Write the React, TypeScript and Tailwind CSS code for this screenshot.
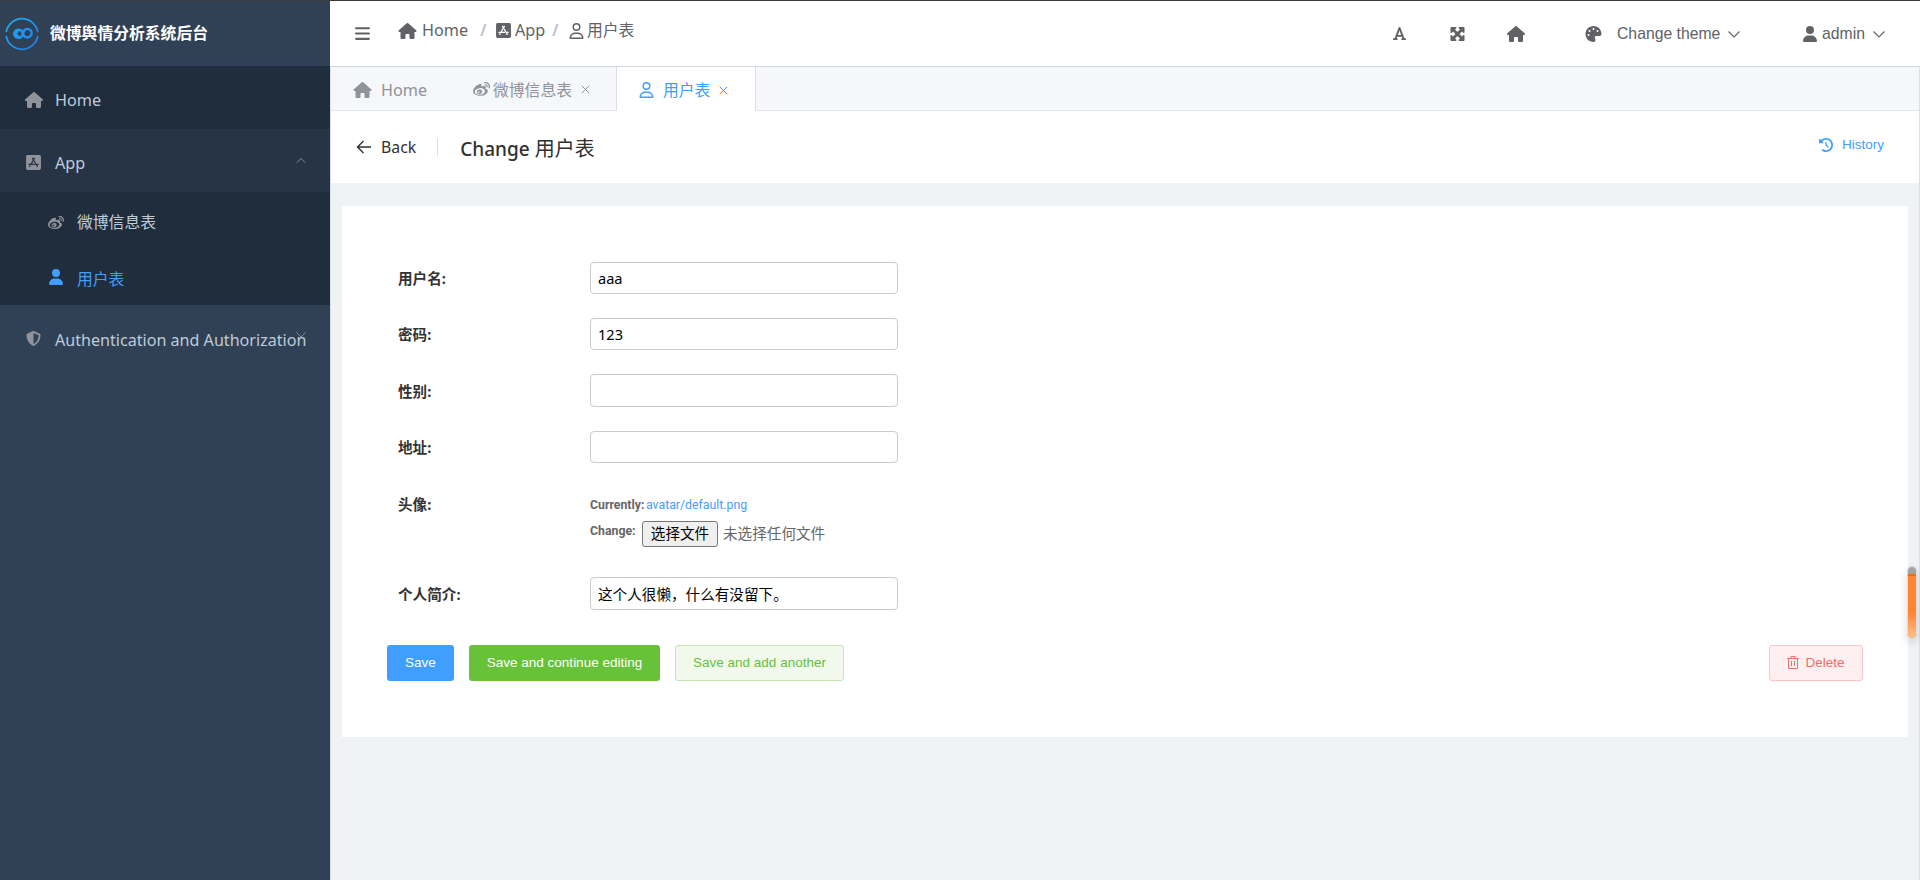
import React from "react";
import {
  FaAppStoreIos,
  FaBars,
  FaClockRotateLeft,
  FaFont,
  FaHouse,
  FaMaximize,
  FaPalette,
  FaRegUser,
  FaShieldHalved,
  FaUser,
  FaWeibo,
} from "react-icons/fa6";

const fields = [
  { label: "用户名:", value: "aaa", row: "h-8 mb-6" },
  { label: "密码:", value: "123", row: "h-8 mb-6" },
  { label: "性别:", value: "", row: "h-[33px] mb-6" },
  { label: "地址:", value: "", row: "h-8" },
];

function Chevron({ className = "", up = false }: { className?: string; up?: boolean }) {
  return (
    <svg viewBox="0 0 12 8" fill="none" stroke="currentColor" strokeWidth="1.1" className={className}>
      <path d={up ? "M1 6.5 6 1.5l5 5" : "M.5 1.5 6 7l5.5-5.5"} />
    </svg>
  );
}

function Close({ className = "" }: { className?: string }) {
  return (
    <svg viewBox="0 0 10 10" fill="none" stroke="currentColor" strokeWidth="1.1" className={className}>
      <path d="m.8.8 8.4 8.4M9.2.8.8 9.2" />
    </svg>
  );
}

function Logo() {
  return (
    <svg viewBox="0 0 34 34" fill="none" className="mt-px ml-[5px] size-[34px] shrink-0">
      <defs>
        <linearGradient id="logo" x1="0" y1="0" x2="34" y2="34" gradientUnits="userSpaceOnUse">
          <stop stopColor="#20b4f0" />
          <stop offset="1" stopColor="#1f77f2" />
        </linearGradient>
      </defs>
      <path d="M1.200 15.200a16 16 0 0 1 31.600 0M1.200 18.800a16 16 0 0 0 31.600 0" stroke="url(#logo)" strokeWidth="1.7" />
      <path
        d="M13.500 15.200a1.900 1.900 0 1 0 .3 3.200M9.300 17a4.300 4.300 0 0 1 7.400-2.900l2 4.300a4.300 4.300 0 1 0 .5-5.200l-2.400 6.200A4.300 4.300 0 0 1 9.300 17"
        stroke="url(#logo)"
        strokeWidth="2.4"
        strokeLinejoin="round"
      />
    </svg>
  );
}

function Sidebar() {
  return (
    <aside className="w-[330px] shrink-0 bg-[#304156] text-[#bfcbd9]">
      <div className="flex h-[66px] items-center border-t border-[#3b3b3b]">
        <Logo />
        <span className="ml-[11px] text-[15.8px] font-bold text-white">微博舆情分析系统后台</span>
      </div>
      <div className="flex h-[63px] items-center bg-[#1f2d3d] pt-1 pl-[25px]">
        <FaHouse className="h-4 w-[18px] text-[#909399]" />
        <span className="mt-0.5 ml-3 text-[16.2px]">Home</span>
      </div>
      <div className="flex h-[63px] items-center bg-[#263445] pt-1 pl-[25px]">
        <FaAppStoreIos className="size-[17px] text-[#909399]" />
        <span className="mt-0.5 ml-[13px] text-[16.2px]">App</span>
        <Chevron up className="mr-6 mb-1 ml-auto h-[7px] w-[10px] text-[#909399]" />
      </div>
      <div className="h-[113px] bg-[#1f2d3d]">
        <div className="flex h-[56px] items-center pt-1.5 pl-12">
          <FaWeibo className="size-4 text-[#909399]" />
          <span className="ml-[13px]">微博信息表</span>
        </div>
        <div className="flex h-[57px] items-center pt-[7px] pl-[49px] text-[#409eff]">
          <FaUser className="mb-1.5 h-4 w-[14px]" />
          <span className="ml-[14px]">用户表</span>
        </div>
      </div>
      <div className="relative flex h-[63px] items-center pt-[5px] pl-[26px]">
        <FaShieldHalved className="mb-0.5 h-[15px] w-[15px] text-[#909399]" />
        <span className="mt-0.5 ml-[14px] text-[16.1px] whitespace-nowrap">Authentication and Authorization</span>
        <Chevron className="absolute top-[26px] right-6 h-[7px] w-[10px] text-[#909399]" />
      </div>
    </aside>
  );
}

function Header() {
  return (
    <header className="flex h-[66px] items-center border-t border-[#3b3b3b] pl-[25px] text-[#606266]">
      <FaBars className="h-[17px] w-[15px]" />
      <nav className="mb-1.5 ml-7 flex items-center">
        <FaHouse className="h-4 w-[19px]" />
        <span className="ml-[5px] w-[58px] text-[16.2px]">Home</span>
        <span className="w-[15px] font-bold text-[#c0c4cc]">/</span>
        <FaAppStoreIos className="size-[17px]" />
        <span className="ml-[3px] w-[37px] text-[16.2px]">App</span>
        <span className="w-[17px] font-bold text-[#c0c4cc]">/</span>
        <FaRegUser className="h-4 w-[15px]" />
        <span className="ml-[3px]">用户表</span>
      </nav>
      <div className="mr-[35px] ml-auto flex items-center font-['Liberation_Sans',Arial,sans-serif] text-[15.75px]">
        <FaFont className="h-[15px] w-[15px]" />
        <FaMaximize className="ml-[42px] h-4 w-[17px]" />
        <FaHouse className="ml-[41px] h-4 w-[18px]" />
        <FaPalette className="ml-[60px] h-4 w-[17px]" />
        <span className="ml-[15px] w-[111px]">Change theme</span>
        <Chevron className="h-2 w-3" />
        <FaUser className="ml-[63px] h-4 w-[14px]" />
        <span className="ml-[5px] w-[51px]">admin</span>
        <Chevron className="h-2 w-3" />
      </div>
    </header>
  );
}

function Tabs() {
  return (
    <div className="flex h-[45px] border-t border-[#d1d5e0] bg-[#f5f7fa] text-[#909399]">
      <div className="flex w-[119px] items-center border-b border-[#e4e7ed] pt-0.5 pl-[22px]">
        <FaHouse className="h-4 w-[19px]" />
        <span className="mt-0.5 ml-[9px] text-[16.2px]">Home</span>
      </div>
      <div className="flex w-[166px] items-center border-b border-[#e4e7ed] pt-0.5 pl-[23px]">
        <FaWeibo className="size-[17px]" />
        <span className="mt-0.5 ml-[3px] w-[88px]">微博信息表</span>
        <Close className="size-[9px]" />
      </div>
      <div className="flex w-[140px] items-center border-x border-[#dcdfe6] bg-white pt-0.5 pl-[22px] text-[#409eff]">
        <FaRegUser className="h-4 w-[15px]" />
        <span className="mt-0.5 ml-[9px] w-14">用户表</span>
        <Close className="size-[9px]" />
      </div>
      <div className="flex-1 border-b border-[#e4e7ed]" />
    </div>
  );
}

function PageHeader() {
  return (
    <div className="flex h-[72px] items-center bg-white pl-[25px] text-[#303133]">
      <svg viewBox="0 0 16 14" fill="none" stroke="currentColor" strokeWidth="1.4" className="h-[14px] w-4">
        <path d="M15 7H1.500M7.500 1l-6 6 6 6" />
      </svg>
      <span className="mt-0.5 ml-[9px]">Back</span>
      <span className="ml-[21px] h-[18px] w-px bg-[#dcdfe6]" />
      <span className="mt-[3px] ml-[22px] text-[20px]">
        <span className="text-[19px] font-medium">Change</span> 用户表
      </span>
      <div className="mr-[35px] mb-1 ml-auto flex items-center font-['Liberation_Sans',Arial,sans-serif] text-[13.5px] text-[#409eff]">
        <FaClockRotateLeft className="size-[14px]" />
        <span className="ml-[9px]">History</span>
      </div>
    </div>
  );
}

function Field({ label, value, row }: { label: string; value: string; row: string }) {
  return (
    <div className={`flex items-center ${row}`}>
      <label className="mt-px w-[192px] text-[14.6px] font-bold text-[#333]">{label}</label>
      <input
        defaultValue={value}
        className="h-full w-[308px] rounded border border-[#ccc] px-[7px] text-[14.6px] text-black"
      />
    </div>
  );
}

export default function App() {
  return (
    <div className="flex h-[880px] w-[1920px] overflow-hidden bg-white font-['Noto_Sans','Noto_Sans_CJK_SC',sans-serif] text-[15.8px] leading-none">
      <Sidebar />
      <div className="flex min-w-0 flex-1 flex-col">
        <Header />
        <main className="flex flex-1 flex-col border-x border-[#dcdfe6] bg-[#eff3f6]">
          <Tabs />
          <PageHeader />
          <div className="mt-[23px] mr-[11px] ml-[11px] h-[531px] bg-white pt-14">
            <div className="ml-14">
              {fields.map((field) => (
                <Field key={field.label} {...field} />
              ))}
              <div className="flex h-[114px] pt-[34px]">
                <span className="w-[192px] text-[14.6px] font-bold text-[#333]">头像:</span>
                <div className="font-['Roboto','Noto_Sans_CJK_SC',sans-serif] text-[12.300px] text-[#666]">
                  <div className="mt-0.5 flex h-[22px]">
                    <b className="w-14">Currently:</b>
                    <a className="text-[#409eff]">avatar/default.png</a>
                  </div>
                  <div className="flex">
                    <b className="mt-1 w-[52px]">Change:</b>
                    <button className="h-[26px] w-[76px] rounded-[3px] border border-[#767676] bg-[#efefef] text-[14.6px] text-black">
                      选择文件
                    </button>
                    <span className="ml-[5px] pt-[6px] text-[14.6px]">未选择任何文件</span>
                  </div>
                </div>
              </div>
              <Field label="个人简介:" value="这个人很懒，什么有没留下。" row="h-[33px]" />
            </div>
            <div className="mt-[35px] mr-[45px] ml-[45px] flex h-9 font-['Liberation_Sans',Arial,sans-serif] text-[13.5px]">
              <button className="w-[67px] rounded-[3px] bg-[#409eff] text-white">Save</button>
              <button className="ml-[15px] w-[191px] rounded-[3px] bg-[#67c23a] text-white">
                Save and continue editing
              </button>
              <button className="ml-[15px] w-[169px] rounded-[3px] border border-[#c2e7b0] bg-[#f0f9eb] text-[#67c23a]">
                Save and add another
              </button>
              <button className="ml-auto flex w-[94px] items-center justify-center gap-1.5 rounded-[3px] border border-[#fbc4c4] bg-[#fef0f0] text-[#f56c6c]">
                <svg viewBox="0 0 12 13" fill="none" stroke="currentColor" className="mb-px h-[13px] w-3">
                  <path d="M0 2.500h12M4 2V.5h4V2M1.500 2.500v10h9v-10M4.500 5v5M7.500 5v5" />
                </svg>
                Delete
              </button>
            </div>
          </div>
        </main>
      </div>
      {/* floating handle pinned to the right edge */}
      <div className="absolute top-[566px] left-[1907px] h-[73px] w-[10px] overflow-hidden rounded-full border border-[#ddd] bg-[#a3a3a3] pt-[7px] shadow-[0_4px_10px_rgba(0,0,0,0.15)]">
        <div className="h-full border-t-2 border-[#ef6c0b] bg-linear-to-b from-[#ff8533] from-60% to-[#ffc088]" />
      </div>
    </div>
  );
}
